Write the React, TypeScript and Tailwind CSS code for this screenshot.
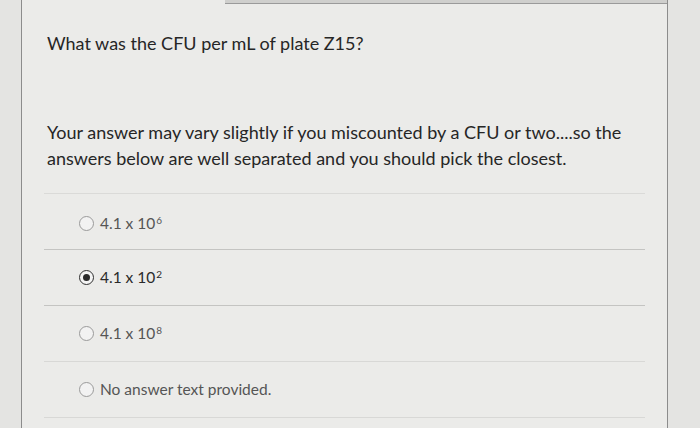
const OPTIONS = [
  { base: "4.1 x 10", exp: "6", checked: false },
  { base: "4.1 x 10", exp: "2", checked: true },
  { base: "4.1 x 10", exp: "8", checked: false },
  { base: "No answer text provided.", exp: "", checked: false },
];

function Radio({ checked }: { checked: boolean }) {
  if (checked) {
    return (
      <span className="flex h-[15px] w-[15px] shrink-0 items-center justify-center rounded-full border-[1.5px] border-[#2f2f2f] bg-[#f4f4f4]">
        <span className="h-[7px] w-[7px] rounded-full bg-[#2a2a2a]" />
      </span>
    );
  }
  return <span className="h-[15px] w-[15px] shrink-0 rounded-full border-[1.5px] border-[#9a9a9a] bg-[#f2f2f2]" />;
}

export default function App() {
  return (
    <div
      className="relative h-[428px] w-[700px] overflow-hidden bg-[#e4e4e2]"
      style={{ fontFamily: "Lato, 'Open Sans', sans-serif" }}
    >
      {/* top edge strip */}
      <div className="absolute left-[225px] top-0 h-[4px] w-[442px] border-b border-[#9a9a9a] bg-[#cfcfcd]" />

      <div className="ml-[21px] h-full w-[647px] border-x border-[#8c8c8c] bg-[#ebebe9]">
        <div className="px-[25px] pt-[31px]">
          <p className="text-[18px] leading-[24px] text-[#262626]">
            What was the CFU per mL of plate Z15?
          </p>
          <p className="mt-[64px] text-[18px] leading-[26px] text-[#262626]">
            Your answer may vary slightly if you miscounted by a CFU or two....so the
            <br />
            answers below are well separated and you should pick the closest.
          </p>
        </div>

        <div className="mx-[22px] mt-[22px] border-t border-[#dadad8]">
          {OPTIONS.map((o, i) => (
            <div
              key={i}
              className={`flex h-[56px] items-center gap-[6px] pl-[35px] ${
                i < 2 ? "border-b border-[#c4c4c2]" : "border-b border-[#d8d8d6]"
              } ${i === 0 ? "pt-[4px]" : ""}`}
            >
              <Radio checked={o.checked} />
              <span
                className={`text-[15.5px] leading-none ${
                  o.checked ? "text-[#2a2a2a]" : "text-[#555555]"
                }`}
              >
                {o.base}
                {o.exp && <sup className="ml-[1px] text-[10px]">{o.exp}</sup>}
              </span>
            </div>
          ))}
        </div>
      </div>
    </div>
  );
}
